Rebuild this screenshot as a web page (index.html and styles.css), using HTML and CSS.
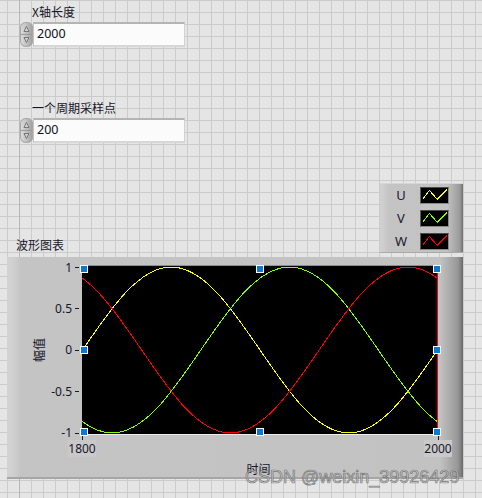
FILE: index.html
```html
<!DOCTYPE html>
<html>
<head>
<meta charset="utf-8">
<link rel="stylesheet" href="styles.css">
</head>
<body>
<div class="panel">
  <div class="ctrl">
    <div class="ctrl-label">X轴长度</div>
    <div class="num">
      <div class="spin">
        <svg width="13" height="25" viewBox="0 0 13 25"><path d="M4 9.5 L6.5 4.5 L9 9.5 Z" fill="#d6d6d6" stroke="#777"/><path d="M4 15.5 L6.5 20.5 L9 15.5 Z" fill="#cfcfcf" stroke="#777"/><line x1="1" y1="12.5" x2="12" y2="12.5" stroke="#9a9a9a"/></svg>
      </div>
      <div class="field">2000</div>
    </div>
  </div>
  <div class="ctrl ctrl2">
    <div class="ctrl-label">一个周期采样点</div>
    <div class="num">
      <div class="spin">
        <svg width="13" height="25" viewBox="0 0 13 25"><path d="M4 9.5 L6.5 4.5 L9 9.5 Z" fill="#d6d6d6" stroke="#777"/><path d="M4 15.5 L6.5 20.5 L9 15.5 Z" fill="#cfcfcf" stroke="#777"/><line x1="1" y1="12.5" x2="12" y2="12.5" stroke="#9a9a9a"/></svg>
      </div>
      <div class="field">200</div>
    </div>
  </div>
  <div class="row">
    <div class="chart-label">波形图表</div>
    <div class="legend">
      <div class="lg-name">U</div>
      <div class="sw"><svg width="27" height="15" viewBox="0 0 27 15"><polyline points="1.7,11.3 8.3,2.3 16.3,11.3 26,1.6" fill="none" stroke="#ffff00" shape-rendering="crispEdges"/></svg></div>
      <div class="lg-name">V</div>
      <div class="sw"><svg width="27" height="15" viewBox="0 0 27 15"><polyline points="1.7,11.3 8.3,2.3 16.3,11.3 26,1.6" fill="none" stroke="#80ff00" shape-rendering="crispEdges"/></svg></div>
      <div class="lg-name">W</div>
      <div class="sw"><svg width="27" height="15" viewBox="0 0 27 15"><polyline points="1.7,11.3 8.3,2.3 16.3,11.3 26,1.6" fill="none" stroke="#ff0000" shape-rendering="crispEdges"/></svg></div>
    </div>
  </div>
  <div class="chart">
    <div class="ytitle">幅值</div>
    <div class="yticks">
      <div class="yt"><span>1</span><i></i></div>
      <div class="yt"><span>0.5</span><i></i></div>
      <div class="yt"><span>0</span><i></i></div>
      <div class="yt"><span>-0.5</span><i></i></div>
      <div class="yt"><span>-1</span><i></i></div>
    </div>
    <div class="plot">
      <svg width="356" height="168" viewBox="0 0 356 168">
        <defs><clipPath id="pc"><rect x="0" y="0" width="356" height="168"/></clipPath></defs>
        <g clip-path="url(#pc)" fill="none" stroke-width="1" shape-rendering="crispEdges">
          <path stroke="#ffff00" d="M0.5,84 c28.94,-42.52 56.63,-83 88.75,-83 c32.12,0 59.81,40.48 88.75,83 c28.94,42.52 56.63,83 88.75,83 c32.12,0 59.81,-40.48 88.75,-83"/>
          <path stroke="#80ff00" d="M-236.17,84 c28.94,-42.52 56.63,-83 88.75,-83 c32.12,0 59.81,40.48 88.75,83 c28.94,42.52 56.63,83 88.75,83 c32.12,0 59.81,-40.48 88.75,-83 c28.94,-42.52 56.63,-83 88.75,-83 c32.12,0 59.81,40.48 88.75,83 c28.94,42.52 56.63,83 88.75,83 c32.12,0 59.81,-40.48 88.75,-83"/>
          <path stroke="#ff0000" d="M-117.83,84 c28.94,-42.52 56.63,-83 88.75,-83 c32.12,0 59.81,40.48 88.75,83 c28.94,42.52 56.63,83 88.75,83 c32.12,0 59.81,-40.48 88.75,-83 c28.94,-42.52 56.63,-83 88.75,-83 c32.12,0 59.81,40.48 88.75,83 c28.94,42.52 56.63,83 88.75,83 c32.12,0 59.81,-40.48 88.75,-83"/>
          <line x1="355.5" y1="3" x2="355.5" y2="167" stroke="#ff0000"/>
        </g>
      </svg>
      <span class="mk" style="left:-2px;top:-1px"></span>
      <span class="mk" style="left:174px;top:-1px"></span>
      <span class="mk" style="left:351px;top:-1px"></span>
      <span class="mk" style="left:-2px;top:80px"></span>
      <span class="mk" style="left:351px;top:80px"></span>
      <span class="mk" style="left:-2px;top:162px"></span>
      <span class="mk" style="left:174px;top:162px"></span>
      <span class="mk" style="left:351px;top:162px"></span>
    </div>
    <div class="xticks">
      <div class="xt"><span>1800</span></div>
      <div class="xt"><span>2000</span></div>
    </div>
    <div class="xtitle">时间</div>
  </div>
  <div class="watermark">CSDN @weixin_39926429</div>
</div>
</body>
</html>
```
FILE: styles.css
```css
body {
  margin: 0;
}
.panel {
  display: flow-root;
  width: 482px;
  height: 498px;
  position: relative;
  overflow: hidden;
  background-color: #e5e5e5;
  background-image:
    linear-gradient(to right, transparent 19px, #b8b8b8 19px, #b8b8b8 20px, transparent 20px),
    linear-gradient(to right, #cbcbcb 1px, transparent 1px),
    linear-gradient(to bottom, #cbcbcb 1px, transparent 1px);
  background-size: 100% 100%, 12px 12px, 12px 12px;
  background-position: 0 0, 7px 0, 0 0;
  background-repeat: no-repeat, repeat, repeat;
  font-family: "Noto Sans", "Noto Sans CJK SC", sans-serif;
  font-size: 12px;
  color: #16162a;
}
.ctrl {
  display: flow-root;
  padding-left: 20px;
}
.ctrl2 {
  margin-top: 49px;
}
.ctrl-label {
  margin: 4px 0 2px 12px;
  line-height: 16px;
  font-family: "Noto Sans CJK SC", "Noto Sans", sans-serif;
}
.num {
  display: flex;
  height: 25px;
}
.spin {
  width: 13px;
  height: 25px;
  border-radius: 6px;
  background: linear-gradient(to right, #e0e0e0, #b4b4b4 70%, #9a9a9a);
  box-shadow: inset 0 0 0 1px #a8a8a8;
}
.spin svg {
  display: block;
}
.field {
  width: 152px;
  height: 25px;
  box-sizing: border-box;
  background: #fbfbfb;
  border-top: 2px solid #b4b4b4;
  border-left: 1px solid #c4c4c4;
  border-bottom: 2px solid #d6d6d6;
  border-right: 1px solid #d2d2d2;
  padding-left: 3px;
  font-size: 12.5px;
  line-height: 20px;
  color: #101018;
}
.row {
  margin-top: 40px;
  width: 463px;
  padding-left: 16px;
  box-sizing: border-box;
  display: flex;
  justify-content: space-between;
  align-items: flex-end;
}
.chart-label {
  line-height: 16px;
  font-family: "Noto Sans CJK SC", "Noto Sans", sans-serif;
}
.legend {
  width: 83px;
  height: 70px;
  box-sizing: border-box;
  padding: 3px 0 0 8px;
  background: linear-gradient(to right, #d0d0d0 0, #cfcfcf 3px, #c4c4c4 8px, #c2c2c2 calc(100% - 16px), #9a9a9a calc(100% - 3px), #6c6c6c 100%);
  border-top: 1px solid #d6d6d6;
  border-bottom: 1px solid #a9a9a9;
  display: grid;
  grid-template-columns: 26px 29px;
  grid-auto-rows: 17px;
  column-gap: 6px;
  row-gap: 6px;
}
.lg-name {
  font-size: 13px;
  line-height: 17px;
  text-align: center;
  color: #1a1a34;
}
.sw {
  background: #000;
  border: 1px solid #5e5e5e;
  border-top-color: #4a4a4a;
  border-bottom-color: #8a8a8a;
  border-right-color: #8a8a8a;
  box-sizing: border-box;
}
.sw svg {
  display: block;
}
.chart {
  margin: 4px 0 0 7px;
  width: 456px;
  height: 222px;
  box-sizing: border-box;
  border-bottom: 2px solid #a6a6a6;
  background: linear-gradient(to right, #d3d3d3 0, #d0d0d0 6px, #c4c4c4 14px, #c2c2c2 calc(100% - 23px), #979797 calc(100% - 5px), #6a6a6a 100%);
  display: grid;
  grid-template-columns: 26px 12px 37px 356px 25px;
  grid-template-rows: 9px 168px 23px 20px;
}
.ytitle {
  grid-column: 2;
  grid-row: 2;
  align-self: center;
  justify-self: center;
  writing-mode: vertical-rl;
  text-orientation: sideways;
  transform: rotate(180deg);
  line-height: 12px;
  font-family: "Noto Sans CJK SC", "Noto Sans", sans-serif;
}
.yticks {
  grid-column: 3;
  grid-row: 2;
  margin: -6.5px 0 -7px;
  display: flex;
  flex-direction: column;
  justify-content: space-between;
  align-items: flex-end;
}
.yt {
  height: 16px;
  display: flex;
  align-items: center;
  line-height: 16px;
}
.yt i {
  display: block;
  width: 4px;
  height: 1px;
  background: #1c1c1c;
  margin: 0 3px;
}
.plot {
  grid-column: 4;
  grid-row: 2;
  background: #000;
  position: relative;
  box-shadow: 0 -1px 0 #8e8e8e, 0 1px 0 #ececec;
}
.plot svg {
  display: block;
}
.mk {
  position: absolute;
  width: 6px;
  height: 6px;
  background: #0a78d7;
  border: 1px solid #ffffff;
}
.xticks {
  grid-column: 4;
  grid-row: 3;
  margin: 0 -14px;
  display: flex;
  justify-content: space-between;
}
.xt {
  width: 28px;
  text-align: center;
  line-height: 16px;
}
.xt::before {
  content: "";
  display: block;
  width: 1px;
  height: 5px;
  margin: 1px auto 1px;
  background: #1c1c1c;
}
.xt span {
  background: #c9c9c9;
}
.xtitle {
  grid-column: 4;
  grid-row: 4;
  text-align: center;
  line-height: 16px;
  padding-top: 4px;
  margin-left: -3px;
  font-family: "Noto Sans CJK SC", "Noto Sans", sans-serif;
}
.watermark {
  position: absolute;
  left: 245px;
  top: 466px;
  font-family: "Liberation Sans", sans-serif;
  font-size: 18px;
  line-height: 22px;
  color: rgba(200, 200, 200, 0.8);
  -webkit-text-stroke: 0.7px rgba(85, 85, 85, 0.7);
  white-space: nowrap;
}
```
